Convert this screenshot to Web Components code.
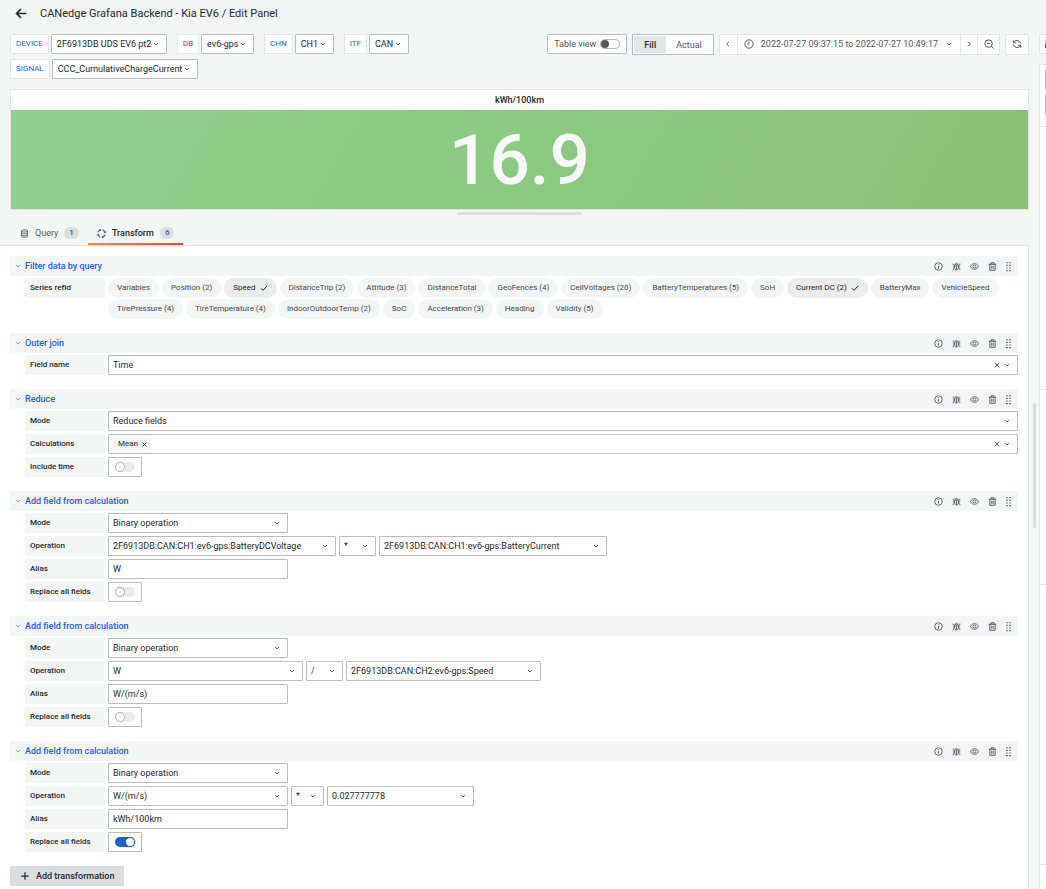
<!DOCTYPE html>
<html lang="en">
<head>
<meta charset="utf-8">
<title>Edit Panel</title>
<style>
    body {
        margin: 0;
        background: #f4f5f5;
        color: #24292e;
        font-family: Roboto, "Liberation Sans", sans-serif;
        font-size: 9px;
        line-height: 12px;
    }
</style>
</head>
<body>
<panel-editor></panel-editor>

<script>
/** Shared shadow root setup */
class BaseElement extends HTMLElement {
    constructor() {
        super();
        const shadowRoot = this.attachShadow({ mode: 'open' });
        const template = document.createElement('template');
        template.innerHTML = `
            <style>
                *, ::before { box-sizing: border-box; }
                button, select, input {
                    margin: 0;
                    padding: 0;
                    border: 0;
                    background: none;
                    color: inherit;
                    font: inherit;
                }
                button { cursor: pointer; }
            </style>
        ` + this.template();
        shadowRoot.appendChild(template.content.cloneNode(true));
    }

    attr(name, fallback = '') {
        return this.hasAttribute(name) ? this.getAttribute(name) : fallback;
    }
}

const ICONS = {
    'arrow-left': '<path d="M21 12H4M11 4l-8 8 8 8" stroke-width="3.2"/>',
    'angle-down': '<path d="M6 9l6 6 6-6" stroke-width="2.6"/>',
    'angle-left': '<path d="M15 5l-7 7 7 7" stroke-width="3"/>',
    'angle-right': '<path d="M9 5l7 7-7 7" stroke-width="3"/>',
    'times': '<path d="M5 5l14 14M19 5L5 19" stroke-width="3"/>',
    'check': '<path d="M3 13l6 6L21 6" stroke-width="3"/>',
    'plus': '<path d="M12 3v18M3 12h18" stroke-width="3"/>',
    'clock': '<circle cx="12" cy="12" r="10"/><path d="M12 6v6H8"/>',
    'zoom-out': '<circle cx="11" cy="11" r="9"/><path d="M18 18l5 5M7 11h8"/>',
    'sync': '<path d="M3 3v6h6M21 21v-6h-6M3 9a9.500 9.500 0 0 1 18 2M21 15a9.500 9.500 0 0 1-18-2" stroke-width="2.4"/>',
    'database': '<path d="M4 5c0-4 16-4 16 0v14c0 4-16 4-16 0zM4 5c0 4 16 4 16 0M4 10c0 4 16 4 16 0M4 15c0 4 16 4 16 0"/>',
    'process': '<path d="M3 9c0-4 2-6 6-6M7 0l3 3-3 3M15 3c4 0 6 2 6 6M24 7l-3 3-3-3M21 15c0 4-2 6-6 6M17 24l-3-3 3-3M9 21c-4 0-6-2-6-6M0 17l3-3 3 3" stroke-width="2.6"/>',
    'info': '<circle cx="12" cy="12" r="10"/><path d="M12 11v7M12 6v2.500"/>',
    'bug': '<path d="M7 8h10v8c0 7-10 7-10 0zM8 8c0-6 8-6 8 0M12 9v12M2 13h5M17 13h5M3 4v3l4 3M21 4v3l-4 3M3 22v-3l4-3M21 22v-3l-4-3"/>',
    'eye': '<path d="M1 12c5-10 17-10 22 0-5 10-17 10-22 0z"/><circle cx="12" cy="12" r="4"/>',
    'trash': '<path d="M2 6h20M8 6V2h8v4M5 6v16h14V6M10 10v8M14 10v8" stroke-width="2.6"/>',
    'drag': '<path d="M6 2h4M14 2h4M6 9h4M14 9h4M6 16h4M14 16h4M6 23h4M14 23h4" stroke-width="3"/>'
};

/** Line icon: <ui-icon name="..."> sized by --size */
class UiIcon extends BaseElement {
    template() {
        return `
            <style>
                :host { display: inline-flex; flex: none; }
                svg {
                    width: var(--size, 10px);
                    height: var(--size, 10px);
                    overflow: visible;
                    fill: none;
                    stroke: currentColor;
                    stroke-width: 2.4;
                }
            </style>
            <svg viewBox="0 0 24 24" aria-hidden="true">${ICONS[this.attr('name')]}</svg>
        `;
    }
}
customElements.define('ui-icon', UiIcon);

/** Drop-down, optionally clearable and with a selected chip */
class UiSelect extends BaseElement {
    template() {
        const chip = this.attr('chip');
        return `
            <style>
                :host {
                    display: grid;
                    grid-template-columns: minmax(0, 1fr);
                    height: 20px;
                    border: 1px solid #b9bbbc;
                    border-radius: 1px;
                    background: #fff;
                    box-sizing: border-box;
                }
                select {
                    grid-area: 1 / 1;
                    appearance: none;
                    width: 100%;
                    padding: 0 18px 0 4px;
                    line-height: 16px;
                }
                .end {
                    grid-area: 1 / 1;
                    justify-self: end;
                    align-self: center;
                    display: flex;
                    align-items: center;
                    gap: 2px;
                    padding-right: 6px;
                    pointer-events: none;
                    color: #55585c;
                    --size: 8px;
                }
                :host([compact]) select { width: auto; padding: 0 14px 0 5px; }
                .end button { display: flex; pointer-events: auto; }
                .chip {
                    grid-area: 1 / 1;
                    justify-self: start;
                    align-self: center;
                    display: flex;
                    align-items: center;
                    gap: 3px;
                    height: 12px;
                    margin-left: 4px;
                    padding: 0 3px 0 5px;
                    background: #f4f5f5;
                    font-size: 8px;
                    z-index: 1;
                    --size: 7px;
                }
                .chip button { display: flex; }
            </style>
            <select aria-label="${this.attr('label')}"><option>${this.attr('value')}</option></select>
            ${chip ? `<span class="chip">${chip}<button aria-label="Remove"><ui-icon name="times"></ui-icon></button></span>` : ''}
            <span class="end">
                ${this.hasAttribute('clearable') ? '<button aria-label="Clear"><ui-icon name="times"></ui-icon></button>' : ''}
                <ui-icon name="angle-down"></ui-icon>
            </span>
        `;
    }
}
customElements.define('ui-select', UiSelect);

/** Single line text box */
class UiInput extends BaseElement {
    template() {
        return `
            <style>
                :host { display: block; }
                input {
                    display: block;
                    width: 100%;
                    height: 20px;
                    padding: 0 4px;
                    border: 1px solid #b9bbbc;
                    border-radius: 1px;
                    background: #fff;
                }
            </style>
            <input type="text" aria-label="${this.attr('label')}" value="${this.attr('value')}">
        `;
    }
}
customElements.define('ui-input', UiInput);

/** Boxed on/off switch, with optional text before it */
class UiSwitch extends BaseElement {
    template() {
        return `
            <style>
                :host { display: block; }
                label {
                    display: flex;
                    align-items: center;
                    gap: 4px;
                    height: 20px;
                    padding: 0 6px;
                    border: 1px solid #b9bbbc;
                    border-radius: 1px;
                    background: #fff;
                    color: #55585c;
                }
                input {
                    appearance: none;
                    display: flex;
                    width: 20px;
                    height: 10px;
                    border-radius: 5px;
                    background: #e9eaea;
                }
                input::before {
                    content: "";
                    width: 10px;
                    height: 10px;
                    border: 1px solid #b0b2b4;
                    border-radius: 5px;
                    background: #fff;
                }
                input:checked { justify-content: flex-end; background: #1f62c4; }
                input:checked::before { border-color: #1f62c4; }
                :host([outlined]) input { border: 1px solid #b0b2b4; background: #fff; }
                :host([outlined]) input::before { width: 8px; height: 8px; border: 0; background: #55585c; }
            </style>
            <label>
                <slot></slot>
                <input type="checkbox" aria-label="${this.attr('label')}" ${this.hasAttribute('checked') ? 'checked' : ''}>
            </label>
        `;
    }
}
customElements.define('ui-switch', UiSwitch);

/** Dashboard variable: name tag and its drop-down */
class TemplateVariable extends BaseElement {
    template() {
        return `
            <style>
                :host { display: flex; gap: 2px; }
                span {
                    display: flex;
                    align-items: center;
                    height: 20px;
                    padding: 0 5px;
                    border: 1px solid #e4e5e6;
                    background: #fff;
                    color: #1f5fe0;
                    font-size: 8px;
                }
            </style>
            <span>${this.attr('name')}</span>
            <ui-select compact label="${this.attr('name')}" value="${this.attr('value')}"></ui-select>
        `;
    }
}
customElements.define('template-variable', TemplateVariable);

/** Time range buttons */
class TimePicker extends BaseElement {
    template() {
        return `
            <style>
                :host { display: flex; gap: 5px; color: #55585c; }
                .group { display: flex; border: 1px solid #e4e5e6; background: #fff; }
                button {
                    display: flex;
                    align-items: center;
                    justify-content: center;
                    height: 18px;
                    min-width: 17px;
                }
                button + button { border-left: 1px solid #e4e5e6; }
                .range { gap: 7px; padding: 0 7px 0 6px; }
                .wide { width: 22px; }
                .small { --size: 8px; }
            </style>
            <div class="group">
                <button aria-label="Back"><ui-icon class="small" name="angle-left"></ui-icon></button>
                <button class="range">
                    <ui-icon name="clock"></ui-icon>
                    <slot></slot>
                    <ui-icon class="small" name="angle-down"></ui-icon>
                </button>
                <button aria-label="Forward"><ui-icon class="small" name="angle-right"></ui-icon></button>
                <button class="wide" aria-label="Zoom out"><ui-icon name="zoom-out"></ui-icon></button>
            </div>
            <div class="group">
                <button class="wide" aria-label="Refresh"><ui-icon name="sync"></ui-icon></button>
            </div>
        `;
    }
}
customElements.define('time-picker', TimePicker);

/** Fill / Actual choice */
class SizeToggle extends BaseElement {
    template() {
        return `
            <style>
                :host { display: flex; height: 21px; padding: 1px; border: 1px solid #b9bbbc; background: #fff; box-sizing: border-box; }
                button { padding: 0 10px; color: #55585c; }
                button.on { background: #e4e5e6; color: #24292e; font-weight: 500; }
            </style>
            <button class="on">Fill</button>
            <button>Actual</button>
        `;
    }
}
customElements.define('size-toggle', SizeToggle);

/** Stat panel with title */
class StatPanel extends BaseElement {
    template() {
        return `
            <style>
                :host { display: block; border: 1px solid #e4e5e6; background: #fff; text-align: center; }
                h2 { margin: 0; font-size: 9px; font-weight: 500; line-height: 20px; }
                .value {
                    padding-top: 1px;
                    background: linear-gradient(120deg, #8fd08e, #89c274);
                    color: #f7f8fa;
                    font-size: 71px;
                    font-weight: 500;
                    line-height: 98px;
                }
            </style>
            <h2>${this.attr('heading')}</h2>
            <div class="value"><slot></slot></div>
        `;
    }
}
customElements.define('stat-panel', StatPanel);

/** Editor tab with counter */
class EditorTab extends BaseElement {
    template() {
        return `
            <style>
                :host { display: flex; color: #55585c; --size: 9px; }
                button {
                    display: flex;
                    align-items: center;
                    gap: 6px;
                    padding: 0 9px;
                    border-bottom: 2px solid transparent;
                }
                :host([active]) button {
                    border-image: linear-gradient(90deg, #ff8833, #f53e4c) 1;
                    color: #24292e;
                    font-weight: 500;
                }
                .count {
                    padding: 0 5px;
                    border-radius: 6px;
                    background: #dcddde;
                    color: #55585c;
                    font-size: 8px;
                    font-weight: 500;
                }
            </style>
            <button>
                <ui-icon name="${this.attr('icon')}"></ui-icon>
                <slot></slot>
                <span class="count">${this.attr('count')}</span>
            </button>
        `;
    }
}
customElements.define('editor-tab', EditorTab);

/** One collapsible transformation */
class TransformCard extends BaseElement {
    template() {
        return `
            <style>
                :host { display: block; }
                header {
                    display: flex;
                    align-items: center;
                    height: 20px;
                    padding: 0 7px 0 4px;
                    background: #f4f5f5;
                    color: #55585c;
                }
                h3 { flex: 1; margin: 0; font-size: 9px; font-weight: 500; }
                button { display: flex; align-items: center; justify-content: center; }
                h3 button { gap: 3px; color: #1f5fe0; }
                h3 ui-icon { color: #8a8d90; --size: 8px; }
                nav { display: flex; gap: 9px; --size: 9px; }
                .move { width: 5px; }
                .rows { display: grid; gap: 3px; padding: 2px 0 0 15px; }
            </style>
            <header>
                <h3><button><ui-icon name="angle-down"></ui-icon>${this.attr('heading')}</button></h3>
                <nav>
                    <button aria-label="Info"><ui-icon name="info"></ui-icon></button>
                    <button aria-label="Debug"><ui-icon name="bug"></ui-icon></button>
                    <button aria-label="Disable"><ui-icon name="eye"></ui-icon></button>
                    <button aria-label="Remove"><ui-icon name="trash"></ui-icon></button>
                    <button class="move" aria-label="Move"><ui-icon name="drag"></ui-icon></button>
                </nav>
            </header>
            <div class="rows"><slot></slot></div>
        `;
    }
}
customElements.define('transform-card', TransformCard);

/** Label and controls on one line */
class FieldRow extends BaseElement {
    template() {
        return `
            <style>
                :host { display: flex; align-items: flex-start; gap: 3px; }
                span {
                    flex: none;
                    width: 80px;
                    padding-left: 5px;
                    background: #f4f5f5;
                    font-size: 8px;
                    font-weight: 500;
                    line-height: 20px;
                }
                ::slotted(*) { flex: 0 1 var(--w, auto); }
                ::slotted([grow]) { flex: 1; }
            </style>
            <span>${this.attr('label')}</span>
            <slot></slot>
        `;
    }
}
customElements.define('field-row', FieldRow);

/** Wrapping list of query pills; a leading * marks a selected one */
class PillList extends BaseElement {
    template() {
        const pills = this.attr('items').split('|').map((item) => {
            const on = item.startsWith('*');
            return on
                ? `<button class="on" aria-pressed="true">${item.slice(1)}<ui-icon name="check"></ui-icon></button>`
                : `<button aria-pressed="false">${item}</button>`;
        });
        return `
            <style>
                :host { display: flex; flex-wrap: wrap; gap: 1px 3px; }
                button {
                    display: flex;
                    align-items: center;
                    gap: 4px;
                    height: 20px;
                    padding: 0 9px;
                    border-radius: 10px;
                    background: #f4f5f5;
                    color: #44474b;
                    font-size: 8px;
                    --size: 8px;
                }
                .on { background: #ebecec; color: #1b1f23; }
            </style>
            ${pills.join('')}
        `;
    }
}
customElements.define('pill-list', PillList);

/** Edge of the options pane */
class OptionsPane extends BaseElement {
    template() {
        return `
            <style>
                :host { display: flex; flex-direction: column; gap: 10px; padding-top: 34px; overflow: hidden; }
                .viz { height: 20px; padding: 5px; border: 1px solid #e4e5e6; border-right: 0; background: #fff; }
                .viz i { display: block; width: 8px; height: 8px; background: linear-gradient(#f2c98a 50%, #3a5fa8 50%); }
                .list { flex: 1; border: 1px solid #e4e5e6; border-width: 1px 0 0 1px; background: #fff; }
                .search { display: grid; gap: 5px; padding: 5px 0 11px 5px; }
                .search i { height: 20px; border: 1px solid #b9bbbc; border-right: 0; }
                .group { border-top: 1px solid #e4e5e6; }
                .g1 { height: 263px; }
                .g2 { height: 195px; }
                .g3 { height: 280px; }
            </style>
            <div class="viz"><i></i></div>
            <div class="list">
                <div class="search"><i></i><i></i></div>
                <div class="group g1"></div>
                <div class="group g2"></div>
                <div class="group g3"></div>
                <div class="group"></div>
            </div>
        `;
    }
}
customElements.define('options-pane', OptionsPane);

/** Whole page */
class PanelEditor extends BaseElement {
    template() {
        return `
            <style>
                :host {
                    display: grid;
                    grid-template-columns: minmax(0, 1fr) 10px 7px;
                    height: 100vh;
                    overflow: hidden;
                }
                main { display: flex; flex-direction: column; min-height: 0; }
                .title { display: flex; align-items: center; gap: 12px; height: 27px; padding-left: 15px; }
                .title button { display: flex; --size: 13px; }
                h1 { margin: 0; font-size: 11px; font-weight: 400; }
                .bar {
                    display: flex;
                    justify-content: space-between;
                    align-items: flex-start;
                    padding: 7px 0 10px 10px;
                }
                .vars { display: flex; flex-wrap: wrap; gap: 5px 10px; }
                .tools { display: flex; gap: 5px; flex: none; }
                stat-panel { margin-left: 10px; }
                .handle { align-self: center; width: 125px; height: 3px; margin: 2px 0 0 10px; border-radius: 2px; background: #dcddde; }
                .tabs { display: flex; height: 31px; padding: 8px 0 0 11px; border-bottom: 1px solid #e4e5e6; }
                .content {
                    flex: 1;
                    display: flex;
                    flex-direction: column;
                    gap: 14px;
                    padding: 10px 10px 0;
                    border-right: 1px solid #e4e5e6;
                    background: #fff;
                    overflow: hidden;
                }
                .add {
                    display: flex;
                    align-items: center;
                    align-self: flex-start;
                    gap: 6px;
                    height: 20px;
                    padding: 0 10px;
                    background: #dcddde;
                    font-weight: 500;
                }
                .grip { display: grid; align-items: center; justify-items: center; }
                .grip i { width: 3px; height: 125px; margin-top: 41px; border-radius: 2px; background: #dcddde; }
            </style>
            <main>
                <div class="title">
                    <button aria-label="Back"><ui-icon name="arrow-left"></ui-icon></button>
                    <h1>CANedge Grafana Backend - Kia EV6 / Edit Panel</h1>
                </div>
                <div class="bar">
                    <div class="vars">
                        <template-variable name="DEVICE" value="2F6913DB UDS EV6 pt2"></template-variable>
                        <template-variable name="DB" value="ev6-gps"></template-variable>
                        <template-variable name="CHN" value="CH1"></template-variable>
                        <template-variable name="ITF" value="CAN"></template-variable>
                        <template-variable name="SIGNAL" value="CCC_CumulativeChargeCurrent"></template-variable>
                    </div>
                    <div class="tools">
                        <ui-switch outlined label="Table view">Table view</ui-switch>
                        <size-toggle></size-toggle>
                        <time-picker>2022-07-27 09:37:15 to 2022-07-27 10:49:17</time-picker>
                    </div>
                </div>
                <stat-panel heading="kWh/100km">16.9</stat-panel>
                <div class="handle"></div>
                <div class="tabs">
                    <editor-tab icon="database" count="1">Query</editor-tab>
                    <editor-tab icon="process" count="6" active>Transform</editor-tab>
                </div>
                <div class="content">
                    <transform-card heading="Filter data by query">
                        <field-row label="Series refId">
                            <pill-list grow items="Variables|Position (2)|*Speed|DistanceTrip (2)|Attitude (3)|DistanceTotal|GeoFences (4)|CellVoltages (20)|BatteryTemperatures (5)|SoH|*Current DC (2)|BatteryMax|VehicleSpeed|TirePressure (4)|TireTemperature (4)|IndoorOutdoorTemp (2)|SoC|Acceleration (3)|Heading|Validity (5)"></pill-list>
                        </field-row>
                    </transform-card>
                    <transform-card heading="Outer join">
                        <field-row label="Field name"><ui-select grow clearable label="Field name" value="Time"></ui-select></field-row>
                    </transform-card>
                    <transform-card heading="Reduce">
                        <field-row label="Mode"><ui-select grow label="Mode" value="Reduce fields"></ui-select></field-row>
                        <field-row label="Calculations"><ui-select grow clearable label="Calculations" value="" chip="Mean"></ui-select></field-row>
                        <field-row label="Include time"><ui-switch label="Include time"></ui-switch></field-row>
                    </transform-card>
                    <transform-card heading="Add field from calculation">
                        <field-row label="Mode"><ui-select style="--w: 180px" label="Mode" value="Binary operation"></ui-select></field-row>
                        <field-row label="Operation">
                            <ui-select style="--w: 228px" label="Left field" value="2F6913DB:CAN:CH1:ev6-gps:BatteryDCVoltage"></ui-select>
                            <ui-select style="--w: 37px" label="Operator" value="*"></ui-select>
                            <ui-select style="--w: 228px" label="Right field" value="2F6913DB:CAN:CH1:ev6-gps:BatteryCurrent"></ui-select>
                        </field-row>
                        <field-row label="Alias"><ui-input style="--w: 180px" label="Alias" value="W"></ui-input></field-row>
                        <field-row label="Replace all fields"><ui-switch label="Replace all fields"></ui-switch></field-row>
                    </transform-card>
                    <transform-card heading="Add field from calculation">
                        <field-row label="Mode"><ui-select style="--w: 180px" label="Mode" value="Binary operation"></ui-select></field-row>
                        <field-row label="Operation">
                            <ui-select style="--w: 195px" label="Left field" value="W"></ui-select>
                            <ui-select style="--w: 37px" label="Operator" value="/"></ui-select>
                            <ui-select style="--w: 195px" label="Right field" value="2F6913DB:CAN:CH2:ev6-gps:Speed"></ui-select>
                        </field-row>
                        <field-row label="Alias"><ui-input style="--w: 180px" label="Alias" value="W/(m/s)"></ui-input></field-row>
                        <field-row label="Replace all fields"><ui-switch label="Replace all fields"></ui-switch></field-row>
                    </transform-card>
                    <transform-card heading="Add field from calculation">
                        <field-row label="Mode"><ui-select style="--w: 180px" label="Mode" value="Binary operation"></ui-select></field-row>
                        <field-row label="Operation">
                            <ui-select style="--w: 180px" label="Left field" value="W/(m/s)"></ui-select>
                            <ui-select style="--w: 33px" label="Operator" value="*"></ui-select>
                            <ui-select style="--w: 147px" label="Right field" value="0.027777778"></ui-select>
                        </field-row>
                        <field-row label="Alias"><ui-input style="--w: 180px" label="Alias" value="kWh/100km"></ui-input></field-row>
                        <field-row label="Replace all fields"><ui-switch checked label="Replace all fields"></ui-switch></field-row>
                    </transform-card>
                    <button class="add"><ui-icon name="plus"></ui-icon>Add transformation</button>
                </div>
            </main>
            <div class="grip"><i></i></div>
            <options-pane></options-pane>
        `;
    }
}
customElements.define('panel-editor', PanelEditor);
</script>
</body>
</html>
